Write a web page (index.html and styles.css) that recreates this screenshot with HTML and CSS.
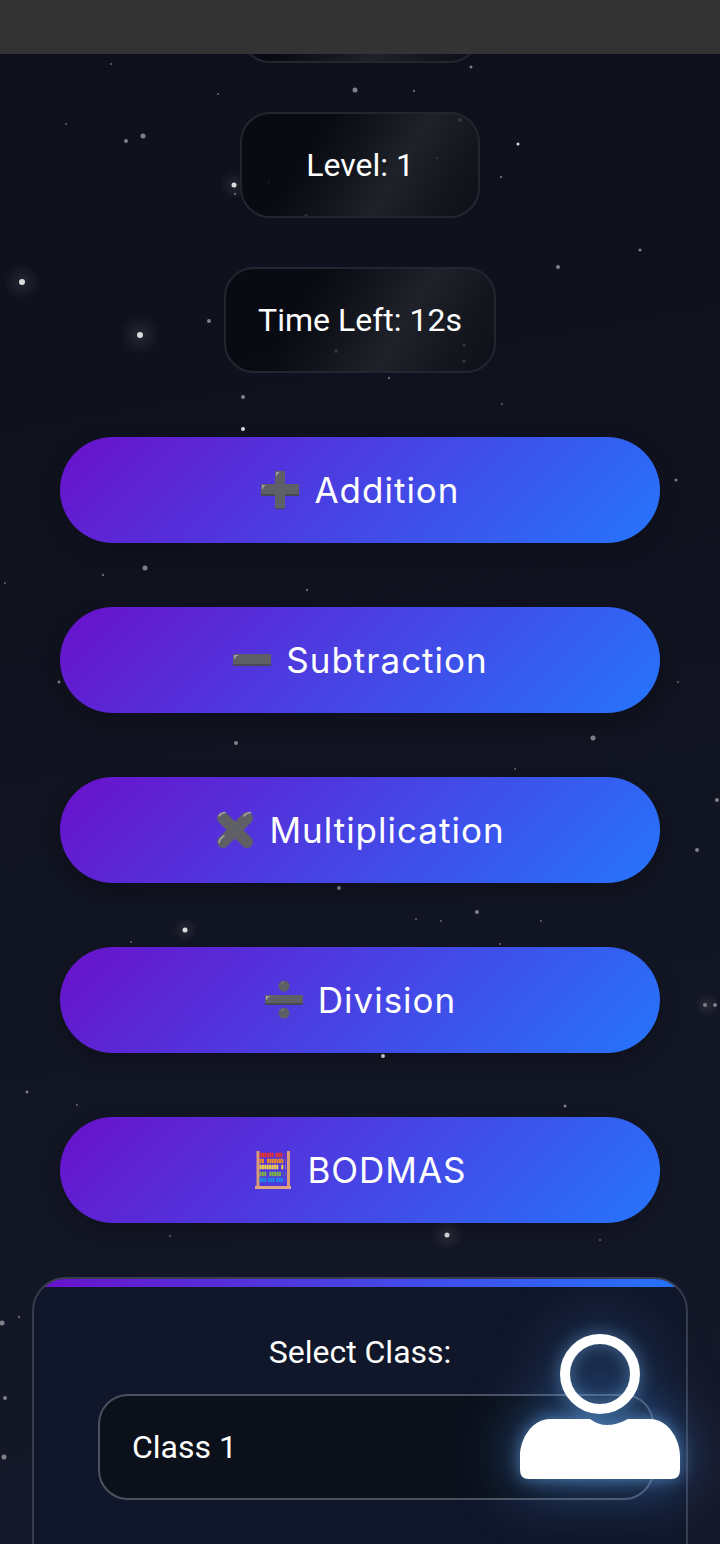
FILE: index.html
```html
<!DOCTYPE html>
<html lang="en">
<head>
    <meta charset="UTF-8">
    <meta name="viewport" content="width=device-width, initial-scale=1.0">
    <title>Math Game</title>
    <link rel="stylesheet" href="styles.css">
</head>
<body>
    <div id="page">
        <!-- star field, sits behind everything -->
        <svg class="stars" viewBox="0 0 720 1544" width="720" height="1544">
            <defs>
                <radialGradient id="halo">
                    <stop offset="0" stop-color="#fff" stop-opacity="0.09"/>
                    <stop offset="1" stop-color="#fff" stop-opacity="0"/>
                </radialGradient>
            </defs>
            <g fill="url(#halo)">
                <circle cx="22" cy="282" r="18"/>
                <circle cx="140" cy="335" r="20"/>
                <circle cx="234" cy="185" r="14"/>
                <circle cx="185" cy="930" r="12"/>
                <circle cx="447" cy="1235" r="16"/>
                <circle cx="707" cy="1005" r="12"/>
            </g>
            <g class="star-bright">
                <circle cx="22" cy="282" r="3"/>
                <circle cx="140" cy="335" r="3"/>
                <circle cx="234" cy="185" r="2.5"/>
                <circle cx="185" cy="930" r="2.5"/>
                <circle cx="447" cy="1235" r="2.5"/>
                <circle cx="243" cy="429" r="2"/>
                <circle cx="518" cy="144" r="1.5"/>
                <circle cx="383" cy="1056" r="2"/>
            </g>
            <g class="star-mid">
                <circle cx="355" cy="90" r="2.5"/>
                <circle cx="143" cy="136" r="2.5"/>
                <circle cx="126" cy="141" r="2"/>
                <circle cx="471" cy="67" r="1.5"/>
                <circle cx="460" cy="120" r="2"/>
                <circle cx="209" cy="321" r="2"/>
                <circle cx="243" cy="397" r="2"/>
                <circle cx="306" cy="216" r="2"/>
                <circle cx="336" cy="351" r="2"/>
                <circle cx="464" cy="345" r="1.5"/>
                <circle cx="464" cy="361" r="1.5"/>
                <circle cx="145" cy="568" r="2.5"/>
                <circle cx="640" cy="250" r="1.5"/>
                <circle cx="558" cy="267" r="2"/>
                <circle cx="593" cy="738" r="2.5"/>
                <circle cx="236" cy="743" r="2"/>
                <circle cx="339" cy="888" r="2"/>
                <circle cx="697" cy="850" r="2"/>
                <circle cx="717" cy="800" r="2"/>
                <circle cx="705" cy="1005" r="2"/>
                <circle cx="715" cy="1005" r="2"/>
                <circle cx="477" cy="912" r="2"/>
                <circle cx="2" cy="1323" r="2.5"/>
                <circle cx="5" cy="1398" r="2"/>
                <circle cx="4" cy="1457" r="2.5"/>
                <circle cx="59" cy="682" r="1.5"/>
                <circle cx="676" cy="480" r="1.5"/>
                <circle cx="565" cy="1106" r="1.5"/>
                <circle cx="27" cy="1092" r="1.5"/>
            </g>
            <g class="star-small">
                <circle cx="111" cy="64" r="1"/>
                <circle cx="66" cy="124" r="1"/>
                <circle cx="414" cy="91" r="1.2"/>
                <circle cx="218" cy="94" r="1"/>
                <circle cx="235" cy="194" r="1.2"/>
                <circle cx="269" cy="182" r="1"/>
                <circle cx="437" cy="158" r="1.2"/>
                <circle cx="501" cy="177" r="1.2"/>
                <circle cx="389" cy="378" r="1.2"/>
                <circle cx="502" cy="404" r="1"/>
                <circle cx="103" cy="575" r="1.2"/>
                <circle cx="307" cy="590" r="1.2"/>
                <circle cx="5" cy="583" r="1"/>
                <circle cx="678" cy="682" r="1"/>
                <circle cx="515" cy="769" r="1"/>
                <circle cx="541" cy="921" r="1"/>
                <circle cx="416" cy="919" r="1"/>
                <circle cx="441" cy="921" r="1"/>
                <circle cx="500" cy="944" r="1"/>
                <circle cx="131" cy="942" r="1"/>
                <circle cx="77" cy="1105" r="1"/>
                <circle cx="170" cy="1236" r="1"/>
                <circle cx="19" cy="1317" r="1.2"/>
                <circle cx="600" cy="1240" r="1"/>
            </g>
        </svg>

        <div class="top-bar"></div>

        <div class="content">
            <div class="stat stat-cut"></div>
            <div class="stat">Level: 1</div>
            <div class="stat">Time Left: 12s</div>

            <div class="menu">
                <button class="op-btn">
                    <svg class="op-icon" viewBox="0 0 40 40">
                        <path class="op-edge" d="M15 2h10v13h14v11H25v13H15V26H1V15h14z"/>
                        <path class="op-face" d="M15 1h10v13h14v10H25v14H15V24H1V14h14z"/>
                        <path class="op-shine" d="M16 6V3q0-1 1-1h3q-3 1-3 4zM2 19v-3q0-1 1-1h3q-3 1-3 4z"/>
                    </svg>
                    <span>Addition</span>
                </button>
                <button class="op-btn">
                    <svg class="op-icon" viewBox="0 0 40 40">
                        <path class="op-edge" d="M1 15h38v11H1z"/>
                        <path class="op-face" d="M1 14h38v10H1z"/>
                        <path class="op-shine" d="M2 19v-3q0-1 1-1h4q-4 1-4 4z"/>
                    </svg>
                    <span>Subtraction</span>
                </button>
                <button class="op-btn">
                    <svg class="op-icon" viewBox="0 0 40 40">
                        <path class="op-cross" d="M8 8L32 32M32 8L8 32"/>
                        <path class="op-glint" d="M4 6Q6 3 10 2.500M29 6Q31 3 35.500 2.500M4 32.500Q5 28 9 26"/>
                    </svg>
                    <span>Multiplication</span>
                </button>
                <button class="op-btn">
                    <svg class="op-icon" viewBox="0 0 40 40">
                        <path class="op-edge" d="M1 15h38v10H1z"/>
                        <path class="op-face" d="M1 15h38v8H1z"/>
                        <circle class="op-face" cx="20" cy="6" r="5.500"/>
                        <circle class="op-face" cx="20" cy="33" r="5.500"/>
                        <path class="op-shine" d="M2 20v-3q0-1 1-1h4q-4 1-4 4zM16.500 5q1-3 4-3-3 1-4 3zM16.500 32q1-3 4-3-3 1-4 3z"/>
                    </svg>
                    <span>Division</span>
                </button>
                <button class="op-btn">
                    <svg class="op-icon" viewBox="0 0 40 40">
                        <rect x="3.500" y="1" width="3" height="36" fill="#d99a78"/>
                        <rect x="34" y="1" width="3" height="36" fill="#d99a78"/>
                        <rect x="2" y="36" width="36" height="3" fill="#e0a57f"/>
                        <path d="M6.500 5H34" stroke="#e0342e" stroke-width="4.500" stroke-dasharray="2 .4 2 .4 2 .4 2 .4 2 .4 2 2 2 .4 2 .4 2"/>
                        <path d="M6.500 11H34" stroke="#f08a24" stroke-width="4.500" stroke-dasharray="2 .4 2 3 2 .4 2 .4 2 .4 2 .4 2 .4 2 .4 2"/>
                        <path d="M6.500 17H34" stroke="#f7d348" stroke-width="4.500" stroke-dasharray="2 .4 2 .4 2 .4 2 .4 2 .4 2 .4 2 .4 2 3 2"/>
                        <path d="M6.500 24H34" stroke="#7cb342" stroke-width="4.500" stroke-dasharray="2 .4 2 .4 2 3 2 .4 2 .4 2 .4 2 .4 2"/>
                        <path d="M6.500 30H34" stroke="#1e88e5" stroke-width="4.500" stroke-dasharray="2 .4 2 .4 2 1.500 2 .4 2 .4 2 1.500 2 .4 2 .4 2"/>
                    </svg>
                    <span>BODMAS</span>
                </button>
            </div>

            <div class="class-panel">
                <label class="class-label" for="classSelect">Select Class:</label>
                <select class="class-select" id="classSelect">
                    <option>Class 1</option>
                </select>
            </div>
        </div>

        <!-- floating profile button -->
        <svg class="profile" viewBox="0 0 160 146" width="160" height="146">
            <circle cx="80" cy="40" r="35" fill="none" stroke="#fff" stroke-width="10"/>
            <path fill="#fff" d="M30 85H70Q78 91 87 91Q97 91 108 85H130C148 85 160 105 160 122V136Q160 145 151 145H9Q0 145 0 136V122C0 105 12 85 30 85Z"/>
        </svg>
    </div>
</body>
</html>
```

FILE: styles.css
```css
* {
    margin: 0;
    padding: 0;
    box-sizing: border-box;
}

html, body {
    height: 100%;
    font-family: "Roboto", sans-serif;
    color: #fff;
}

#page {
    position: relative;
    display: flex;
    flex-direction: column;
    width: 720px;
    height: 1544px;
    overflow: hidden;
    background: linear-gradient(170deg, #0e111c 0%, #10131f 40%, #151829 100%);
}

.stars {
    position: absolute;
    top: 0;
    left: 0;
}

.star-bright {
    fill: #dcdcdf;
}

.star-mid {
    fill: #7f8188;
}

.star-small {
    fill: #666871;
}

.top-bar {
    position: relative;
    flex-shrink: 0;
    height: 54px;
    background-color: #333;
}

.content {
    position: relative;
    flex-grow: 1;
    display: flex;
    flex-direction: column;
    align-items: center;
    overflow: hidden;
}

.stat {
    flex-shrink: 0;
    display: flex;
    justify-content: center;
    align-items: center;
    min-width: 240px;
    height: 106px;
    padding: 0 32px 1px;
    margin-bottom: 49px;
    font-size: 32px;
    border: 2px solid #23262f;
    border-radius: 30px;
    background: linear-gradient(121deg, rgba(7, 8, 14, 0.75) 0%, rgba(7, 8, 14, 0.75) 30%, rgba(20, 21, 28, 0.75) 46%, rgba(36, 38, 45, 0.8) 64%, rgba(22, 23, 30, 0.7) 84%, rgba(14, 14, 22, 0.6) 100%);
}

.stat-cut {
    margin-top: -97px;
}

.menu {
    flex-shrink: 0;
    display: flex;
    flex-direction: column;
    gap: 64px;
    width: 600px;
    margin-top: 15px;
}

.op-btn {
    flex-shrink: 0;
    display: flex;
    justify-content: center;
    align-items: center;
    gap: 14px;
    height: 106px;
    border: none;
    border-radius: 53px;
    color: #fff;
    font-family: "Inter", sans-serif;
    font-size: 35px;
    letter-spacing: 1px;
    background: linear-gradient(135deg, #6a11cb 0%, #2575fc 100%);
    box-shadow: 0 8px 20px rgba(0, 0, 0, 0.2);
}

.op-icon {
    width: 40px;
    height: 40px;
}

.op-face {
    fill: #5f6066;
}

.op-edge {
    fill: #474955;
}

.op-shine {
    fill: #a3a3a8;
}

.op-cross {
    fill: none;
    stroke: #5f6066;
    stroke-width: 12;
    stroke-linecap: round;
}

.op-glint {
    fill: none;
    stroke: #a3a3a8;
    stroke-width: 1.5;
    stroke-linecap: round;
}

.class-panel {
    display: flex;
    flex-direction: column;
    align-items: center;
    flex-shrink: 0;
    width: 656px;
    height: 400px;
    margin-top: 54px;
    padding-top: 55px;
    border: 2px solid #383e4e;
    border-radius: 34px;
    background:
        linear-gradient(90deg, #6a11cb, #2575fc) top / 100% 8px no-repeat,
        #10172a;
}

.class-label {
    font-size: 32px;
    line-height: 36px;
    margin-bottom: 24px;
}

.class-select {
    appearance: none;
    flex-shrink: 0;
    width: 556px;
    height: 106px;
    margin-left: 32px;
    padding: 0 32px;
    color: #fff;
    font-family: "Roboto", sans-serif;
    font-size: 32px;
    border: 2px solid #4d525f;
    border-radius: 30px;
    background-color: #0b101b;
}

.profile {
    position: absolute;
    top: 1334px;
    left: 520px;
    filter: drop-shadow(0 0 8px rgba(130, 195, 255, 0.5)) drop-shadow(0 0 30px rgba(70, 140, 230, 0.65));
}
```
